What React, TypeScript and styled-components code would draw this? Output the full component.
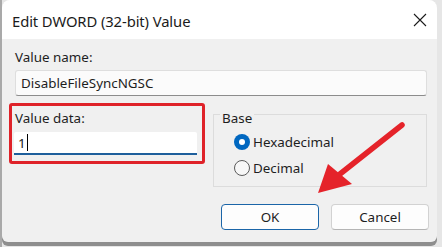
import React, { FC } from 'react';
import styled, { createGlobalStyle } from 'styled-components';

const GlobalStyle = createGlobalStyle`
  html, body {
    margin: 0;
    padding: 0;
    background: #9c9c9c;
  }
  body {
    font-family: 'Noto Sans', 'Open Sans', sans-serif;
    color: #1a1a1a;
  }
`;

const Screen = styled.div`
  width: 442px;
  height: 247px;
  overflow: hidden;
  background: linear-gradient(90deg, #a9a9a9 0, #a9a9a9 2px, #e6e6e6 2px);
  display: flex;
  flex-direction: column;
  position: relative;
`;

const Window = styled.div`
  width: 435px;
  height: 242px;
  margin-left: 2px;
  border-radius: 8px 8px 6px 6px;
  overflow: hidden;
  background: #f0f0f0;
  display: flex;
  flex-direction: column;
  box-shadow: 0 1px 0 #8e8e8e, 0 4px 0 #8e8e8e;
`;

const TitleBar = styled.div`
  height: 39px;
  flex-shrink: 0;
  background: #ffffff;
  display: flex;
  align-items: center;
  justify-content: space-between;
  padding: 2px 10px 0 10px;
  box-sizing: border-box;
`;

const Title = styled.div`
  font-size: 14.8px;
  color: #1b1b1b;
  letter-spacing: -0.1px;
`;

const CloseButton = styled.div`
  width: 14px;
  height: 14px;
  display: flex;
  margin-top: -1px;
`;

const Body = styled.div`
  flex: 1;
  padding: 9px 8px 0 13px;
  display: flex;
  flex-direction: column;
`;

const Label = styled.div<{ $indent?: number }>`
  font-size: 13.4px;
  line-height: 18px;
  margin-left: ${(p) => p.$indent ?? 0}px;
  color: #1e1e1e;
`;

const NameInput = styled.div`
  margin-top: 4px;
  height: 26px;
  width: 412px;
  box-sizing: border-box;
  background: #fbfbfb;
  border: 1px solid #dedede;
  border-bottom-color: #8c8c8c;
  border-radius: 3px;
  display: flex;
  align-items: center;
  padding-left: 5px;
  font-size: 13.4px;
  color: #1e1e1e;
`;

const Row = styled.div`
  display: flex;
  align-items: flex-start;
  margin-top: 7px;
  margin-left: -6px;
`;

const Highlight = styled.div`
  width: 196px;
  height: 61px;
  box-sizing: border-box;
  border: 3px solid #df2229;
  border-radius: 3px;
  padding: 3px 5px 0 2px;
  display: flex;
  flex-direction: column;
`;

const DataInput = styled.div`
  margin-top: 5px;
  height: 23px;
  box-sizing: border-box;
  background: #ffffff;
  border-bottom: 2px solid #1e5f9c;
  border-radius: 2px 2px 0 0;
  display: flex;
  align-items: center;
  padding-left: 4px;
  font-size: 13.4px;
`;

const Caret = styled.span`
  display: inline-block;
  width: 1px;
  height: 17px;
  background: #000;
  margin-left: 1px;
`;

const Group = styled.fieldset`
  margin: -2px 0 0 8px;
  width: 214px;
  height: 86px;
  box-sizing: border-box;
  border: 1px solid #dcdcdc;
  padding: 0 0 0 20px;
  display: flex;
  flex-direction: column;
`;

const Legend = styled.legend`
  font-size: 13.4px;
  line-height: 18px;
  padding: 8px 2px 0 2px;
  margin-left: -14px;
  color: #1e1e1e;
`;

const RadioRow = styled.div<{ $first?: boolean }>`
  display: flex;
  align-items: center;
  height: 26px;
  margin-top: ${(p) => (p.$first ? 2 : 0)}px;
  font-size: 13.4px;
  color: #1e1e1e;
  gap: 3px;
`;

const RadioDot = styled.span<{ $checked?: boolean }>`
  width: 16px;
  height: 16px;
  box-sizing: border-box;
  border-radius: 50%;
  background: ${(p) => (p.$checked ? '#0067c0' : '#f7f7f7')};
  border: ${(p) => (p.$checked ? 'none' : '1px solid #5a5a5a')};
  display: flex;
  align-items: center;
  justify-content: center;
  &::after {
    content: '';
    display: ${(p) => (p.$checked ? 'block' : 'none')};
    width: 6px;
    height: 6px;
    border-radius: 50%;
    background: #ffffff;
  }
`;

const ButtonRow = styled.div`
  display: flex;
  justify-content: flex-end;
  gap: 12px;
  margin-top: 17px;
`;

const Button = styled.div<{ $primary?: boolean }>`
  width: 98px;
  height: 26px;
  box-sizing: border-box;
  border-radius: 4px;
  background: #fdfdfd;
  border: 1px solid ${(p) => (p.$primary ? '#1b65a8' : '#d2d2d2')};
  border-bottom-color: ${(p) => (p.$primary ? '#1b65a8' : '#b5b5b5')};
  display: flex;
  align-items: center;
  justify-content: center;
  font-size: 13.4px;
  color: #1e1e1e;
`;

const ArrowLayer = styled.svg`
  position: absolute;
  left: 0;
  top: 0;
  pointer-events: none;
`;

const App: FC = () => {
  return (
    <>
      <GlobalStyle />
      <Screen>
        <Window>
          <TitleBar>
            <Title>Edit DWORD (32-bit) Value</Title>
            <CloseButton>
              <svg width="14" height="14" viewBox="0 0 14 14">
                <path d="M1 1 L13 13 M13 1 L1 13" stroke="#1b1b1b" strokeWidth="1.1" />
              </svg>
            </CloseButton>
          </TitleBar>
          <Body>
            <Label>Value name:</Label>
            <NameInput>DisableFileSyncNGSC</NameInput>
            <Row>
              <Highlight>
                <Label $indent={1}>Value data:</Label>
                <DataInput>
                  1<Caret />
                </DataInput>
              </Highlight>
              <Group>
                <Legend>Base</Legend>
                <RadioRow $first>
                  <RadioDot $checked />
                  Hexadecimal
                </RadioRow>
                <RadioRow>
                  <RadioDot />
                  Decimal
                </RadioRow>
              </Group>
            </Row>
            <ButtonRow>
              <Button $primary>OK</Button>
              <Button>Cancel</Button>
            </ButtonRow>
          </Body>
        </Window>
        <ArrowLayer width="442" height="247" viewBox="0 0 442 247">
          <line x1="402" y1="125" x2="340" y2="174" stroke="#e5232a" strokeWidth="5.5" strokeLinecap="round" />
          <polygon points="318,193 328,164 352,184" fill="#e5232a" />
        </ArrowLayer>
      </Screen>
    </>
  );
};

export default App;
